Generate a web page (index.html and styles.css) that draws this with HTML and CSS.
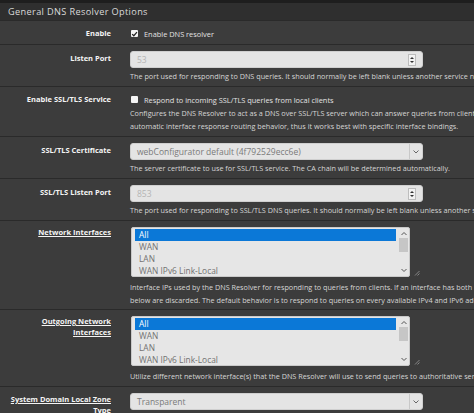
FILE: index.html
```html
<!DOCTYPE html>
<html>
<head>
<meta charset="utf-8">
<title>General DNS Resolver Options</title>
<link rel="stylesheet" href="styles.css">
</head>
<body>
<div class="page">
  <div class="topbar"></div>
  <div class="heading">General DNS Resolver Options</div>

  <div class="row row-enable">
    <div class="label">Enable</div>
    <div class="ctrl">
      <div class="check"><span class="box"><svg viewBox="0 0 8 8" width="8" height="8"><path d="M1.3 4.2 L3.2 6 L6.8 1.8" fill="none" stroke="#222" stroke-width="1.4"/></svg></span><span>Enable DNS resolver</span></div>
    </div>
  </div>

  <div class="row">
    <div class="label lbl-input">Listen Port</div>
    <div class="ctrl">
      <div class="input"><span class="ph">53</span><span class="spin"><svg viewBox="0 0 8 12" width="8" height="12"><rect x="0.5" y="0.5" width="7" height="11" fill="#f2f2f2" stroke="#bdbdbd"/><path d="M2 5 L4 3 L6 5 Z M2 7 L4 9 L6 7 Z" fill="#333"/></svg></span></div>
      <div class="help">The port used for responding to DNS queries. It should normally be left blank unless another service needs to bind to TCP/UDP port 53.</div>
    </div>
  </div>

  <div class="row">
    <div class="label">Enable SSL/TLS Service</div>
    <div class="ctrl">
      <div class="check"><span class="box"></span><span>Respond to incoming SSL/TLS queries from local clients</span></div>
      <div class="help help-tight">Configures the DNS Resolver to act as a DNS over SSL/TLS server which can answer queries from clients which also support DNS over TLS. Activating this option disables<br>automatic interface response routing behavior, thus it works best with specific interface bindings.</div>
    </div>
  </div>

  <div class="row">
    <div class="label lbl-input">SSL/TLS Certificate</div>
    <div class="ctrl">
      <div class="select"><span class="val">webConfigurator default (4f792529ecc6e)</span><span class="chev"><svg viewBox="0 0 8 6" width="8" height="6"><path d="M1.5 1.5 L4 4 L6.5 1.5" fill="none" stroke="#666" stroke-width="1"/></svg></span></div>
      <div class="help">The server certificate to use for SSL/TLS service. The CA chain will be determined automatically.</div>
    </div>
  </div>

  <div class="row">
    <div class="label lbl-input">SSL/TLS Listen Port</div>
    <div class="ctrl">
      <div class="input"><span class="ph">853</span><span class="spin"><svg viewBox="0 0 8 12" width="8" height="12"><rect x="0.5" y="0.5" width="7" height="11" fill="#f2f2f2" stroke="#bdbdbd"/><path d="M2 5 L4 3 L6 5 Z M2 7 L4 9 L6 7 Z" fill="#333"/></svg></span></div>
      <div class="help">The port used for responding to SSL/TLS DNS queries. It should normally be left blank unless another service needs to bind to TCP/UDP port 853.</div>
    </div>
  </div>

  <div class="row row-list">
    <div class="label"><a class="lnk" href="#">Network Interfaces</a></div>
    <div class="ctrl">
      <div class="listwrap">
        <div class="listbox">
          <div class="items">
            <div class="opt sel">All</div>
            <div class="opt">WAN</div>
            <div class="opt">LAN</div>
            <div class="opt">WAN IPv6 Link-Local</div>
          </div>
          <div class="scroll">
            <svg class="arr" viewBox="0 0 8 5" width="8" height="5"><path d="M1.5 4 L4 1.5 L6.5 4" fill="none" stroke="#555" stroke-width="1"/></svg>
            <div class="thumb"></div>
            <svg class="arr down" viewBox="0 0 8 5" width="8" height="5"><path d="M1.5 1 L4 3.5 L6.5 1" fill="none" stroke="#555" stroke-width="1"/></svg>
          </div>
        </div>
        <svg class="grip" viewBox="0 0 6 6" width="6" height="6"><path d="M5.5 1 L1 5.5 M5.5 3.5 L3.5 5.5" stroke="#9a9a9a" stroke-width="0.8"/></svg>
      </div>
      <div class="help help-list">Interface IPs used by the DNS Resolver for responding to queries from clients. If an interface has both IPv4 and IPv6 IPs, both are used. Queries to other interface IPs not selected<br>below are discarded. The default behavior is to respond to queries on every available IPv4 and IPv6 address.</div>
    </div>
  </div>

  <div class="row row-list2">
    <div class="label"><a class="lnk" href="#">Outgoing Network<br>Interfaces</a></div>
    <div class="ctrl">
      <div class="listwrap">
        <div class="listbox">
          <div class="items">
            <div class="opt sel">All</div>
            <div class="opt">WAN</div>
            <div class="opt">LAN</div>
            <div class="opt">WAN IPv6 Link-Local</div>
          </div>
          <div class="scroll">
            <svg class="arr" viewBox="0 0 8 5" width="8" height="5"><path d="M1.5 4 L4 1.5 L6.5 4" fill="none" stroke="#555" stroke-width="1"/></svg>
            <div class="thumb"></div>
            <svg class="arr down" viewBox="0 0 8 5" width="8" height="5"><path d="M1.5 1 L4 3.5 L6.5 1" fill="none" stroke="#555" stroke-width="1"/></svg>
          </div>
        </div>
        <svg class="grip" viewBox="0 0 6 6" width="6" height="6"><path d="M5.5 1 L1 5.5 M5.5 3.5 L3.5 5.5" stroke="#9a9a9a" stroke-width="0.8"/></svg>
      </div>
      <div class="help help-list">Utilize different network interface(s) that the DNS Resolver will use to send queries to authoritative servers and receive their replies. By default all interfaces are used.</div>
    </div>
  </div>

  <div class="row">
    <div class="label"><a class="lnk" href="#">System Domain Local Zone<br>Type</a></div>
    <div class="ctrl">
      <div class="select"><span class="val">Transparent</span><span class="chev"><svg viewBox="0 0 8 6" width="8" height="6"><path d="M1.5 1.5 L4 4 L6.5 1.5" fill="none" stroke="#666" stroke-width="1"/></svg></span></div>
    </div>
  </div>
</div>
</body>
</html>
```

FILE: styles.css
```css
html, body {
  margin: 0;
  padding: 0;
  background: #3c3c3c;
  overflow: hidden;
}

body {
  width: 474px;
  height: 413px;
  font-family: "Open Sans", "Noto Sans", sans-serif;
  color: #e4e4e4;
}

.page {
  width: 474px;
  overflow: hidden;
}

.topbar {
  height: 3px;
  background: #1e1e1e;
}

.heading {
  height: 17px;
  line-height: 17px;
  padding-left: 8px;
  background: #2f2f2f;
  font-size: 9.2px;
  letter-spacing: 0.35px;
  color: #dadada;
}

.row {
  display: flex;
  border-top: 1px solid #2a2a2a;
  padding: 6px 0 3px;
}

.row-enable {
  padding-bottom: 4px;
}

.row-list {
  padding-bottom: 2px;
}

.row-list2 {
  padding-bottom: 3px;
}

.label {
  width: 111px;
  flex: none;
  text-align: right;
  font-weight: 700;
  font-size: 7.5px;
  line-height: 11px;
  padding-top: 1px;
  color: #f4f4f4;
  white-space: nowrap;
}

.lbl-input {
  padding-top: 1.5px;
}

.row-list .label,
.row-list2 .label {
  padding-top: 0;
}

.lnk {
  color: #f4f4f4;
  text-decoration: underline;
}

.ctrl {
  margin-left: 19px;
  width: 600px;
  flex: none;
  white-space: nowrap;
}

.check {
  display: flex;
  align-items: center;
  height: 13px;
  font-size: 7.4px;
  color: #e2e2e2;
}

.box {
  width: 7px;
  height: 7px;
  margin-left: 1px;
  margin-right: 6px;
  background: #f4f4f4;
  border-radius: 1px;
  display: flex;
  align-items: center;
  justify-content: center;
  overflow: hidden;
}

.help {
  margin-top: 2px;
  font-size: 7.25px;
  line-height: 13px;
  color: #d6d6d6;
}

.help-tight {
  margin-top: 1px;
}

.help-list {
  margin-top: 4px;
}

.input,
.select {
  width: 293px;
  height: 17px;
  box-sizing: border-box;
  background: #e4e4e4;
  border: 1px solid #cfcfcf;
  border-radius: 3px;
  display: flex;
  align-items: center;
  font-size: 8.5px;
}

.ph {
  flex: 1;
  padding-left: 6px;
  color: #b4b4b4;
}

.spin {
  display: flex;
  margin-right: 6px;
}

.val {
  flex: 1;
  padding-left: 6px;
  color: #7a7a7a;
}

.chev {
  width: 12px;
  height: 15px;
  border-left: 1px solid #c8c8c8;
  display: flex;
  align-items: center;
  justify-content: center;
}

.listwrap {
  display: flex;
  align-items: flex-end;
}

.listbox {
  margin-left: 1px;
  width: 279px;
  height: 50px;
  box-sizing: border-box;
  background: #e6e6e6;
  border: 1px solid #c9c9c9;
  border-radius: 2px;
  display: flex;
}

.items {
  flex: 1;
  padding: 1px 2px 0 3px;
}

.opt {
  height: 12px;
  line-height: 12px;
  padding-left: 4px;
  font-size: 8.4px;
  color: #727272;
}

.opt.sel {
  background: #0b78d7;
  color: #ffffff;
}

.scroll {
  width: 11px;
  display: flex;
  flex-direction: column;
  align-items: center;
  padding-top: 3px;
}

.arr {
  display: block;
}

.thumb {
  width: 9px;
  height: 14px;
  margin-top: 2px;
  background: #c6c6c6;
}

.arr.down {
  margin-top: auto;
  margin-bottom: 3px;
}

.grip {
  margin-left: 4px;
  margin-bottom: 1px;
}
```
